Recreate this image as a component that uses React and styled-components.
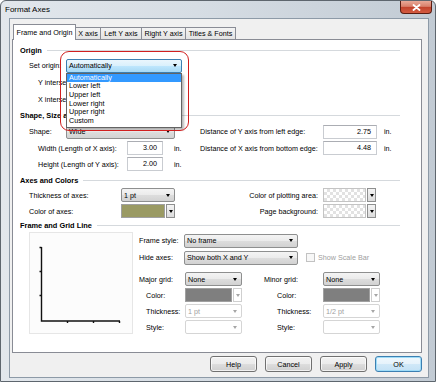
import React from 'react';
import styled, { createGlobalStyle, css } from 'styled-components';

const GlobalStyle = createGlobalStyle`
  html, body {
    margin: 0;
    padding: 0;
    background: #fff;
  }
  body {
    width: 436px;
    height: 382px;
    overflow: hidden;
    font-family: "Liberation Sans", Arial, sans-serif;
    font-size: 7.2px;
    color: #000;
  }
  * {
    box-sizing: border-box;
  }
`;

const Window = styled.div`
  width: 436px;
  height: 382px;
  display: flex;
  flex-direction: column;
  background: linear-gradient(90deg, #e2e7ec 0%, #d6dde4 45%, #c2cbd4 100%);
  border: 1px solid #5e666e;
  border-radius: 6px 6px 0 0;
`;

const TitleBar = styled.div`
  height: 18px;
  display: flex;
  align-items: flex-start;
  justify-content: space-between;
  padding-left: 4px;
`;

const Title = styled.span`
  font-size: 8px;
  line-height: 17px;
`;

const CloseButton = styled.div`
  width: 32px;
  height: 13px;
  margin-right: 3px;
  border: 1px solid #5a1d12;
  border-top: none;
  border-radius: 0 0 4px 4px;
  background: linear-gradient(#e9a997 0%, #d9806b 45%, #c2432c 52%, #d45b40 100%);
  display: flex;
  align-items: center;
  justify-content: center;
`;

const Client = styled.div`
  flex: 1;
  margin: 0 6px 4px 8px;
  border: 1px solid #8d9aa7;
  background: #f0f0f0;
  padding: 5px 6px 5px 2px;
  display: flex;
  flex-direction: column;
`;

const TabStrip = styled.div`
  display: flex;
  align-items: flex-end;
  height: 15px;
  padding-left: 1px;
`;

const Tab = styled.div`
  width: ${(p) => p.$w}px;
  height: 12px;
  margin-left: -1px;
  border: 1px solid #898c95;
  border-bottom: none;
  background: linear-gradient(#f3f3f3, #e3e3e3);
  display: flex;
  align-items: center;
  justify-content: center;
  white-space: nowrap;
  ${(p) =>
    p.$active &&
    css`
      height: 15px;
      margin-left: 0;
      background: #fff;
      position: relative;
      z-index: 1;
      margin-bottom: -1px;
      height: 16px;
    `}
`;

const Panel = styled.div`
  height: 314px;
  background: #fff;
  border: 1px solid #898c95;
  padding: 4px 21px 0 7px;
`;

const SectionHead = styled.div`
  height: 12px;
  margin-top: ${(p) => p.$mt || 0}px;
  display: flex;
  align-items: center;
  font-weight: bold;
  font-size: 7.4px;
  white-space: nowrap;

  &::after {
    content: '';
    flex: 1;
    height: 1px;
    margin-left: 5px;
    background: #d5d9dd;
  }
`;

const Body = styled.div`
  padding-left: 9px;
  margin-top: ${(p) => p.$mt || 0}px;
`;

const Row = styled.div`
  display: flex;
  align-items: center;
  height: ${(p) => p.$h || 16}px;
`;

const Col = styled.div`
  display: flex;
  align-items: center;
  width: ${(p) => (p.$w ? `${p.$w}px` : 'auto')};
  margin-left: ${(p) => p.$ml || 0}px;
  height: 100%;
`;

const Label = styled.span`
  width: ${(p) => p.$w}px;
  padding-left: ${(p) => p.$indent || 0}px;
  flex-shrink: 0;
  white-space: nowrap;
  text-align: ${(p) => (p.$right ? 'right' : 'left')};
  padding-right: ${(p) => (p.$right ? 5 : 0)}px;
`;

const Unit = styled.span`
  margin-left: ${(p) => p.$ml}px;
`;

const Arrow = styled.span`
  width: 0;
  height: 0;
  border-left: 2.5px solid transparent;
  border-right: 2.5px solid transparent;
  border-top: 3px solid ${(p) => (p.$off ? '#a6a6a6' : '#000')};
  margin-right: 4px;
`;

const selectSkins = {
  normal: css`
    border: 1px solid #8e8f8f;
    background: linear-gradient(#f4f4f4 0%, #ebebeb 50%, #dddddd 51%, #d2d2d2 100%);
  `,
  open: css`
    border: 1px solid #3c7fb1;
    background: linear-gradient(#eaf6fd 0%, #d9f0fc 50%, #bee6fd 51%, #a7d9f5 100%);
  `,
  plain: css`
    border: 1px solid #a8abb2;
    background: #fff;
  `,
  off: css`
    border: 1px solid #d5d5d5;
    background: #fff;
    color: #a0a0a0;
  `,
};

const Select = styled.div`
  width: ${(p) => p.$w}px;
  height: 14px;
  flex-shrink: 0;
  border-radius: 2px;
  display: flex;
  align-items: center;
  justify-content: space-between;
  padding-left: 2px;
  white-space: nowrap;
  ${(p) => selectSkins[p.$skin || 'normal']}
`;

const TextInput = styled.div`
  width: ${(p) => p.$w}px;
  height: 14px;
  flex-shrink: 0;
  border: 1px solid #c9ccd1;
  border-top-color: #abadb3;
  background: #fff;
  text-align: right;
  padding-right: 5px;
  line-height: 12px;
`;

const ColorPick = styled.div`
  width: ${(p) => p.$w}px;
  height: 14px;
  flex-shrink: 0;
  display: flex;
  align-items: stretch;
  gap: 1px;
`;

const Swatch = styled.div`
  flex: 1;
  border: 1px solid ${(p) => (p.$checker ? '#c4c4c4' : '#a0a0a0')};
  background: ${(p) => p.$color};
  ${(p) =>
    p.$checker &&
    css`
      background-color: #fff;
      background-image: conic-gradient(#e2e2e2 25%, #fff 0 50%, #e2e2e2 0 75%, #fff 0);
      background-size: 6px 6px;
    `}
`;

const SwatchArrow = styled.div`
  width: 9px;
  border: 1px solid ${(p) => (p.$off ? '#cfcfcf' : '#8e8f8f')};
  background: ${(p) => (p.$off ? '#fff' : 'linear-gradient(#f4f4f4, #dcdcdc)')};
  display: flex;
  align-items: center;
  justify-content: center;

  & > span {
    margin-right: 0;
  }
`;

const SelectWrap = styled.div`
  position: relative;
  display: flex;
`;

const DropList = styled.div`
  position: absolute;
  top: 14px;
  left: 0;
  width: 116px;
  background: #fff;
  border: 1px solid #646464;
  box-shadow: 2px 2px 2px rgba(0, 0, 0, 0.28);
  z-index: 5;
  padding-bottom: 1px;
`;

const DropItem = styled.div`
  height: 8.7px;
  line-height: 8.7px;
  padding-left: 2px;
  ${(p) =>
    p.$hot &&
    css`
      background: #3399ff;
      color: #fff;
    `}
`;

const Callout = styled.div`
  position: absolute;
  left: -6px;
  top: -8px;
  width: 129px;
  height: 80px;
  border: 1.5px solid #d11f1f;
  border-radius: 9px;
  z-index: 6;
  pointer-events: none;
`;

const FrameArea = styled.div`
  display: flex;
  margin-top: 1px;
  gap: 6px;
`;

const Preview = styled.div`
  width: 104px;
  height: 102px;
  border: 1px solid #e6e6e6;
  background: #fcfcfc;
`;

const FrameControls = styled.div`
  display: flex;
  flex-direction: column;
`;

const GridGroup = styled.div`
  display: flex;
  margin-top: 5px;
`;

const GridCol = styled.div`
  display: flex;
  flex-direction: column;
  margin-left: ${(p) => p.$ml || 0}px;
`;

const Check = styled.span`
  width: 9px;
  height: 9px;
  margin-left: 8px;
  border: 1px solid #c2c2c2;
  background: #f7f7f7;
`;

const Muted = styled.span`
  color: #a0a0a0;
  margin-left: 3px;
`;

const ButtonRow = styled.div`
  display: flex;
  justify-content: flex-end;
  gap: 8px;
  margin-top: 3px;
`;

const Button = styled.div`
  width: 47px;
  height: 16px;
  border: 1px solid ${(p) => (p.$default ? '#3c7fb1' : '#707070')};
  border-radius: 3px;
  background: ${(p) =>
    p.$default
      ? 'linear-gradient(#f0f8fd 0%, #e5f2fb 50%, #d0e8f8 51%, #c3e1f5 100%)'
      : 'linear-gradient(#f2f2f2 0%, #ebebeb 50%, #dddddd 51%, #cfcfcf 100%)'};
  box-shadow: inset 0 0 0 1px ${(p) => (p.$default ? '#9edcf8' : 'rgba(255,255,255,0.7)')};
  display: flex;
  align-items: center;
  justify-content: center;
`;

const AxisPreview = () => (
  <svg width="102" height="100" viewBox="0 0 102 100">
    <g stroke="#111" strokeWidth="1.4" fill="none">
      <path d="M11.5 14 V88 H90" />
      <path d="M9.5 14.5 H11.5 M9.5 38.5 H11.5 M9.5 62.5 H11.5" />
      <path d="M37.5 88 V90 M63.5 88 V90 M89.5 88 V90" />
    </g>
  </svg>
);

const originItems = ['Automatically', 'Lower left', 'Upper left', 'Lower right', 'Upper right', 'Custom'];

const GridColumn = ({ ml, labelW, indent, title, skinColor, thickness }) => (
  <GridCol $ml={ml}>
    <Row $h={16}>
      <Label $w={labelW}>{title}</Label>
      <Select $w={57}>
        None
        <Arrow />
      </Select>
    </Row>
    <Row $h={16}>
      <Label $w={labelW} $indent={indent}>Color:</Label>
      <ColorPick $w={57}>
        <Swatch $color={skinColor} />
        <SwatchArrow $off>
          <Arrow $off />
        </SwatchArrow>
      </ColorPick>
    </Row>
    <Row $h={16}>
      <Label $w={labelW} $indent={indent}>Thickness:</Label>
      <Select $w={57} $skin="off">
        {thickness}
        <Arrow $off />
      </Select>
    </Row>
    <Row $h={16}>
      <Label $w={labelW} $indent={indent}>Style:</Label>
      <Select $w={57} $skin="off">
        <span />
        <Arrow $off />
      </Select>
    </Row>
  </GridCol>
);

export default function App() {
  return (
    <>
      <GlobalStyle />
      <Window>
        <TitleBar>
          <Title>Format Axes</Title>
          <CloseButton>
            <svg width="9" height="7" viewBox="0 0 9 7">
              <path d="M1.5 1 L7.5 6 M7.5 1 L1.5 6" stroke="#fff" strokeWidth="1.8" strokeLinecap="round" />
            </svg>
          </CloseButton>
        </TitleBar>
        <Client>
          <TabStrip>
            <Tab $active $w={63}>Frame and Origin</Tab>
            <Tab $w={26}>X axis</Tab>
            <Tab $w={42}>Left Y axis</Tab>
            <Tab $w={45}>Right Y axis</Tab>
            <Tab $w={51}>Titles &amp; Fonts</Tab>
          </TabStrip>
          <Panel>
            <SectionHead>Origin</SectionHead>
            <Body $mt={1}>
              <Row $h={17}>
                <Label $w={37}>Set origin:</Label>
                <SelectWrap>
                  <Select $w={116} $skin="open">
                    Automatically
                    <Arrow />
                  </Select>
                  <DropList>
                    {originItems.map((item, i) => (
                      <DropItem key={item} $hot={i === 0}>
                        {item}
                      </DropItem>
                    ))}
                  </DropList>
                  <Callout />
                </SelectWrap>
              </Row>
              <Row $h={17}>
                <Label $w={60} $indent={9}>Y intersect:</Label>
              </Row>
              <Row $h={17}>
                <Label $w={60} $indent={9}>X intersect:</Label>
              </Row>
            </Body>

            <SectionHead $mt={1}>Shape, Size and Position</SectionHead>
            <Body $mt={2}>
              <Row $h={17}>
                <Col $w={171}>
                  <Label $w={37}>Shape:</Label>
                  <Select $w={109}>
                    Wide
                    <Arrow />
                  </Select>
                </Col>
                <Col>
                  <Label $w={123}>Distance of Y axis from left edge:</Label>
                  <TextInput $w={54}>2.75</TextInput>
                  <Unit $ml={7}>in.</Unit>
                </Col>
              </Row>
              <Row $h={16}>
                <Col $w={171}>
                  <Label $w={98} $indent={9}>Width (Length of X axis):</Label>
                  <TextInput $w={36}>3.00</TextInput>
                  <Unit $ml={11}>in.</Unit>
                </Col>
                <Col>
                  <Label $w={123}>Distance of X axis from bottom edge:</Label>
                  <TextInput $w={54}>4.48</TextInput>
                  <Unit $ml={7}>in.</Unit>
                </Col>
              </Row>
              <Row $h={16}>
                <Col $w={171}>
                  <Label $w={98} $indent={9}>Height (Length of Y axis):</Label>
                  <TextInput $w={36}>2.00</TextInput>
                  <Unit $ml={11}>in.</Unit>
                </Col>
              </Row>
            </Body>

            <SectionHead $mt={2}>Axes and Colors</SectionHead>
            <Body $mt={1}>
              <Row $h={16}>
                <Col $w={171}>
                  <Label $w={92}>Thickness of axes:</Label>
                  <Select $w={54}>
                    1 pt
                    <Arrow />
                  </Select>
                </Col>
                <Col>
                  <Label $w={123} $right>Color of plotting area:</Label>
                  <ColorPick $w={53}>
                    <Swatch $checker />
                    <SwatchArrow>
                      <Arrow />
                    </SwatchArrow>
                  </ColorPick>
                </Col>
              </Row>
              <Row $h={16}>
                <Col $w={171}>
                  <Label $w={92}>Color of axes:</Label>
                  <ColorPick $w={54}>
                    <Swatch $color="#9a9a63" />
                    <SwatchArrow>
                      <Arrow />
                    </SwatchArrow>
                  </ColorPick>
                </Col>
                <Col>
                  <Label $w={123} $right>Page background:</Label>
                  <ColorPick $w={53}>
                    <Swatch $checker />
                    <SwatchArrow>
                      <Arrow />
                    </SwatchArrow>
                  </ColorPick>
                </Col>
              </Row>
            </Body>

            <SectionHead>Frame and Grid Line</SectionHead>
            <Body>
              <FrameArea>
                <Preview>
                  <AxisPreview />
                </Preview>
                <FrameControls>
                  <Row $h={17}>
                    <Label $w={45}>Frame style:</Label>
                    <Select $w={114}>
                      No frame
                      <Arrow />
                    </Select>
                  </Row>
                  <Row $h={17}>
                    <Label $w={45}>Hide axes:</Label>
                    <Select $w={114}>
                      Show both X and Y
                      <Arrow />
                    </Select>
                    <Check />
                    <Muted>Show Scale Bar</Muted>
                  </Row>
                  <GridGroup>
                    <GridColumn labelW={46} indent={7} title="Major grid:" skinColor="#7f7f7f" thickness="1 pt" />
                    <GridColumn ml={22} labelW={59} indent={13} title="Minor grid:" skinColor="#7f7f7f" thickness="1/2 pt" />
                  </GridGroup>
                </FrameControls>
              </FrameArea>
            </Body>
          </Panel>
          <ButtonRow>
            <Button>Help</Button>
            <Button>Cancel</Button>
            <Button>Apply</Button>
            <Button $default>OK</Button>
          </ButtonRow>
        </Client>
      </Window>
    </>
  );
}
